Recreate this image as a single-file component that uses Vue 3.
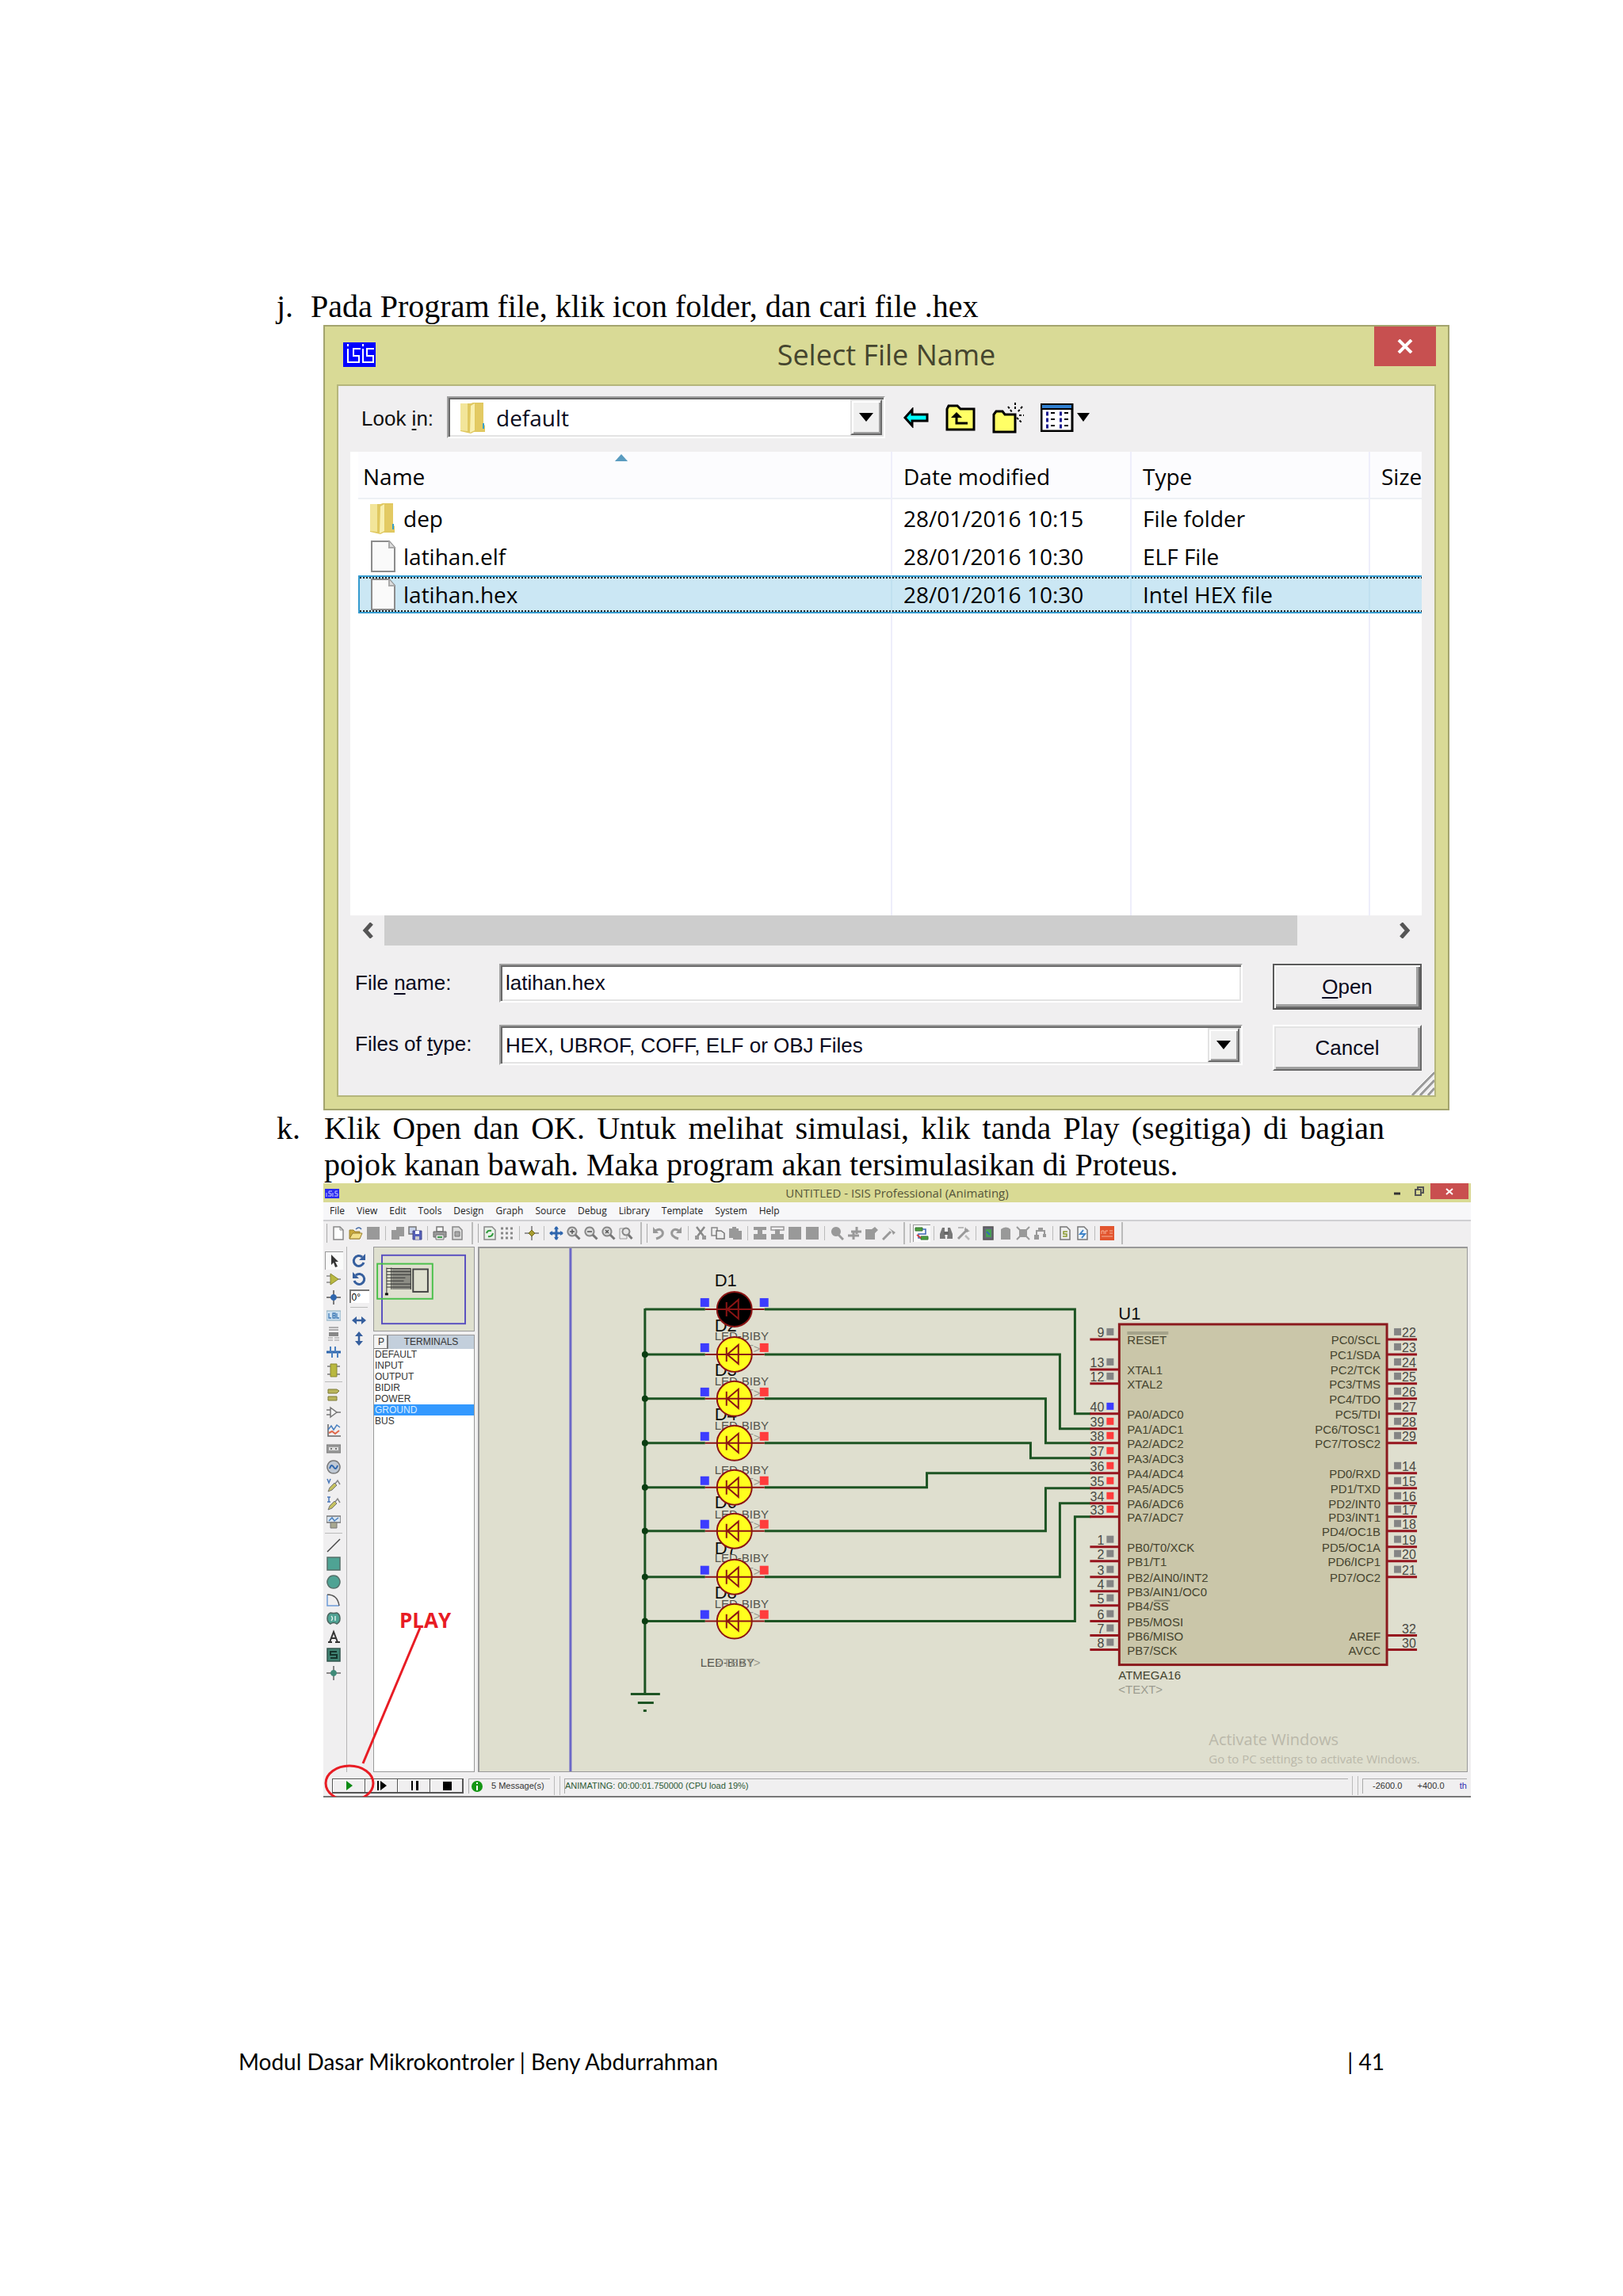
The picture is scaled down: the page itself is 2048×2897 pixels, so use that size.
<script setup>
import { ref } from "vue";

const folder = ref("default");
const fileName = ref("latihan.hex");
const fileType = ref("HEX, UBROF, COFF, ELF or OBJ Files");
const angle = ref("0°");

const files = [
  { name: "dep", date: "28/01/2016 10:15", type: "File folder", icon: "folder" },
  { name: "latihan.elf", date: "28/01/2016 10:30", type: "ELF File", icon: "file" },
  { name: "latihan.hex", date: "28/01/2016 10:30", type: "Intel HEX file", icon: "file", selected: true },
];

const menus = ["File", "View", "Edit", "Tools", "Design", "Graph", "Source", "Debug", "Library", "Template", "System", "Help"];
const terminals = ["DEFAULT", "INPUT", "OUTPUT", "BIDIR", "POWER", "GROUND", "BUS"];

// every icon is a list of [path, fill, stroke, stroke width] on an 18x18 grid
const g = "#999";
const block = [["M1 1H17V17H1Z", g]];
const lens = (mark) => [
  ["M7 1.5A5.5 5.5 0 1 1 6.9 1.5Z", "#ddd", "#888", 2],
  ["M11 11L16.5 16.5", "none", "#777", 3],
  [mark, "none", "#555", 1.5],
];
const probe = (mark) => [
  [mark, "none", "#4a78b8", 1.5],
  ["M2 17L4 12L10 6L13 9L7 15Z", "#c4c060", "#777", 1],
  ["M11 7L14 3L17 8", "none", "#888", 1.5],
];

const icons = {
  new: [["M3 1H11L15 5V17H3Z", "#fff", "#888", 1.5], ["M11 1V5H15", "none", "#888", 1]],
  open: [["M1 16V5H6L8 7H14V16Z", "#c9a93c", "#9a8030", 1], ["M1 16L5 9H17L14 16Z", "#f2e08a", "#9a8030", 1], ["M9 4Q13 0 16 4", "none", "#4a6ea8", 1.5]],
  save: block,
  import: [["M1 5H7V1H17V13H11V17H1Z", g]],
  export: [["M1 1H10V10H1Z", "#c9d4ea", "#777", 1.5], ["M6 6H17V17H6Z", "#5560b8", "#444a90", 1], ["M9 6H14V10H9Z", "#fff"], ["M9 13H14V17H9Z", "#ccc"]],
  print: [["M5 1H13V7H5Z", "#fff", "#777", 1.5], ["M1 7H17V14H1Z", "#999", "#666", 1], ["M4 11H14V17H4Z", "#e6e6e6", "#777", 1], ["M6 14H12", "none", "#3a9a4a", 2]],
  area: [["M3 1H11L15 5V17H3Z", "#ddd", "#888", 1.5], ["M6 7H12V13H6Z", "#aaa", "#777", 1]],
  redraw: [["M2 1H12L16 5V17H2Z", "#e8f0e8", "#888", 1.5], ["M5 9Q6 5 11 6M13 9Q12 14 7 13", "none", "#2f9a3c", 2]],
  grid: [["M1 3H17M1 9H17M1 15H17", "none", "#888", 3, "3 3"]],
  origin: [["M9 0V18M0 9H18", "none", "#777", 1.5], ["M9 5L13 9L9 13L5 9Z", "#a89c30", "#6e6820", 1]],
  pan: [["M9 1V17M1 9H17", "none", "#2f66ad", 3], ["M9 0L12 4H6ZM9 18L12 14H6ZM0 9L4 6V12ZM18 9L14 6V12Z", "#2f66ad"]],
  zoomIn: lens("M4 7H10M7 4V10"),
  zoomOut: lens("M4 7H10"),
  zoomAll: lens("M5 5L9 9M9 5L5 9"),
  zoomArea: [["M1 3H10V16H1Z", "#eee", "#999", 1], ["M9 2.5A4.5 4.5 0 1 1 8.9 2.5Z", "#e6e6e6", "#888", 2], ["M12 11L16.5 16", "none", "#777", 3]],
  undo: [["M6 16Q16 13 14 7Q11 2 5 6", "none", g, 3], ["M2 1V9H9Z", g]],
  redo: [["M12 16Q2 13 4 7Q7 2 13 6", "none", g, 3], ["M16 1V9H9Z", g]],
  cut: [["M4 1L13 13M14 1L5 13", "none", "#888", 2.5], ["M2 12H7V17H2ZM11 12H16V17H11Z", g]],
  copy: [["M1 2H8V12H1Z", "#eee", "#888", 1.5], ["M7 6H13L17 9V16H7Z", "#eee", "#777", 1.5]],
  paste: [["M1 3H5V1H10V3H13V6H17V17H6V15H1Z", g]],
  blockCopy: [["M1 1H17V5H12V10H17V17H1V10H6V5H1Z", g]],
  blockMove: [["M1 1H17V5H1Z", "none", g, 1.5], ["M6 4H12V10H17V17H1V10H6Z", g]],
  blockRotate: block,
  blockDelete: block,
  pick: [["M8 1A6 6 0 1 1 7.9 1Z", g], ["M11 11L17 17", "none", g, 3]],
  make: [["M1 12H15M5 7H18M8 8V17M12 1V10", "none", g, 3]],
  pack: [["M1 4H9L13 1L17 5L13 9V17H1Z", g]],
  decompose: [["M1 17L11 7", "none", g, 3], ["M8 2L17 8L14 11L12 6Z", g]],
  wire: [["M1 2H10V6H1ZM8 13H17V17H8Z", "#4ba040", "#35702e", 1], ["M10 4H14V10H5V15H8", "none", "#3f68b8", 1.5], ["M3 11L8 15", "none", "#d84040", 2]],
  find: [["M4 2H7V9L8 16H1V10ZM11 2H14L17 10V16H10L11 9Z", "#777"], ["M6 7H12V11H6Z", "#666"]],
  props: [["M2 16L14 4", "none", g, 3], ["M11 1L13 5L17 6L13 8L10 5Z", g], ["M2 2H9", "none", "#bbb", 2], ["M11 12L16 17", "none", "#bbb", 2.5]],
  design: [["M3 1H15V17H3Z", "#667", "#555", 1.5], ["M6 4H13V14H6Z", "#48a050"], ["M7 7L11 11", "none", "#3468b8", 2]],
  sheet: [["M3 4Q9 -1 15 4V17H3Z", g]],
  remove: [["M4 4H14V14H4Z", g], ["M1 1L17 17M17 1L1 17", "none", g, 2]],
  goto: [["M6 2H12V6H6ZM1 11H7V17H1ZM12 10H16V14H12Z", g], ["M4 11V6H14V10", "none", g, 2]],
  bom: [["M3 1H11L15 5V17H3Z", "#eee", "#777", 1.5], ["M12 7H7V10H11V13H6", "none", "#8a9a30", 1.5]],
  erc: [["M3 1H11L15 5V17H3Z", "#eef4fb", "#777", 1.5], ["M10 5L6 10H12L8 15", "none", "#3f84c8", 2]],
  ares: [["M0 0H18V18H0Z", "#e2552f"], ["M2 10V6H5V10M7 10V6H10M12 6H16M12 9H16M2 13H16", "none", "#f7b49a", 1]],

  select: [["M6 1V14L9 11L11 17L14 16L11 10H15Z", "#333"]],
  component: [["M0 5H5M0 13H5M14 9H18", "none", "#888", 1.5], ["M5 2L15 9L5 16Z", "#b9b840", "#8a8a30", 1]],
  junction: [["M9 0V18M0 9H18", "none", "#555", 1.5], ["M9 5A4 4 0 1 1 8.9 5Z", "#2f66ad"]],
  label: [["M0 3H18V15H0Z", "#cfe2f2", "#8ab", 1], ["M3 6V12H6M8 6H11V12H8ZM8 9H11M13 6V12H16", "none", "#3f7ab5", 1.3]],
  script: [["M3 1H15M3 4H15", "none", "#999", 1.5], ["M3 7H15V12H3Z", "#888"], ["M2 14H8M10 14H16M2 17H8M10 17H16", "none", "#999", 1]],
  bus: [["M0 9H18", "none", "#2f66ad", 3], ["M5 2V9M11 2V9M7 9V16M14 9V16", "none", "#4a80c0", 2]],
  sub: [["M5 1H13V17H5Z", "#b9b840", "#88872c", 1], ["M1 4H5M1 14H5M13 4H17M13 14H17", "none", "#777", 1.5]],
  terminal: [["M2 3H13L16 5L13 8H2ZM2 12H13V17H2Z", "#b9b55a", "#7d7a38", 1]],
  pin: [["M5 3L13 9L5 15Z", "#f6f6f6", "#777", 1.5], ["M0 6H5M0 12H5M13 9H18", "none", "#777", 1.5]],
  graph: [["M2 1V16H18", "none", "#666", 1.5], ["M2 8L6 3L9 8L13 2L17 5", "none", "#4a80c0", 1.5], ["M3 12L7 10L11 13L16 9", "none", "#e0684a", 2]],
  tape: [["M0 4H18V14H0Z", "#999", "#777", 1], ["M3 7H15V11H3Z", "#ddd"], ["M5 9H7M11 9H13", "none", "#777", 2]],
  generator: [["M9 1A8 8 0 1 1 8.9 1Z", "#bfc8d4", "#777", 1.5], ["M4 11Q6 4 9 9T14 7", "none", "#2f66ad", 2]],
  vprobe: probe("M1 1L3 6L5 1"),
  iprobe: probe("M1 1H5M3 1V7M1 7H5"),
  meter: [["M0 2H18V10H0Z", "#dbe6f0", "#777", 1.5], ["M5 10H13V17H5Z", "#a8a890", "#777", 1], ["M3 8L7 4L10 8L15 4", "none", "#4a80c0", 1.5]],
  line: [["M1 17L17 1", "none", "#444", 1.5]],
  box: [["M1 1H17V17H1Z", "#4fa394", "#55706a", 1.5]],
  circle: [["M9 1A8 8 0 1 1 8.9 1Z", "#4fa394", "#55706a", 1.5]],
  arc: [["M1 2V16H16", "none", "#6c9cd8", 1.5], ["M1 2Q14 2 16 16", "none", "#555", 1.5]],
  path: [["M5 2Q9 3 13 2Q17 4 17 9Q17 14 13 16Q9 13 5 16Q1 14 1 9Q1 4 5 2Z", "#4fa394", "#4a655f", 1.5], ["M6 6Q9 9 6 12M11 6V12", "none", "#dceee9", 1.5]],
  text: [["M2 16H7M11 16H17M4 16L9 3L14 16M6 11H12", "none", "#333", 2]],
  symbol: [["M1 1H17V17H1Z", "#3f8272", "#33564d", 1.5], ["M13 5H5V9H13V13H5", "none", "#16342c", 2]],
  marker: [["M9 0V18M0 9H18", "none", "#666", 1.5], ["M9 5A4 4 0 1 1 8.9 5Z", "#3f8a78"]],
  rotateCw: [["M15 11A6.5 6.5 0 1 1 13 4", "none", "#365f9e", 3], ["M17 0V8H9Z", "#365f9e"]],
  rotateCcw: [["M3 11A6.5 6.5 0 1 0 5 4", "none", "#365f9e", 3], ["M1 0V8H9Z", "#365f9e"]],
  flipH: [["M3 9H15", "none", "#365f9e", 2.5], ["M0 9L6 4V14ZM18 9L12 4V14Z", "#365f9e"]],
  flipV: [["M9 3V15", "none", "#365f9e", 2.5], ["M9 0L14 6H4ZM9 18L14 12H4Z", "#365f9e"]],
};

// "|" is a separator
const toolbars = [
  ["new", "open", "save", "|", "import", "export", "|", "print", "area"],
  ["redraw", "grid", "|", "origin", "|", "pan", "zoomIn", "zoomOut", "zoomAll", "zoomArea"],
  ["undo", "redo", "|", "cut", "copy", "paste", "|", "blockCopy", "blockMove", "blockRotate", "blockDelete", "|", "pick", "make", "pack", "decompose"],
  ["wire", "|", "find", "props", "|", "design", "sheet", "remove", "goto", "|", "bom", "erc", "|", "ares"],
];
const modes = [
  "select", "component", "junction", "label", "script", "bus", "sub", "|",
  "terminal", "pin", "graph", "tape", "generator", "vprobe", "iprobe", "meter", "|",
  "line", "box", "circle", "arc", "path", "text", "symbol", "marker",
];

// y: row of the led, turn: x where the wire bends, pinY: row of the pin it ends on
const leds = [
  { y: 82, turn: 757, pinY: 214, name: "D1", off: true },
  { y: 139, turn: 738, pinY: 233, name: "D2" },
  { y: 195, turn: 720, pinY: 251, name: "D3" },
  { y: 251, turn: 701, pinY: 270, name: "D4" },
  { y: 307, turn: 570, pinY: 289, name: "" },
  { y: 362, turn: 720, pinY: 308, name: "D6" },
  { y: 420, turn: 738, pinY: 327, name: "D7" },
  { y: 476, turn: 757, pinY: 344, name: "D8" },
];

const grey = "#848484";
const red = "#ff3c3c";
const blue = "#3c3cff";

const leftPins = [
  [9, "RESET", 120, grey], [13, "XTAL1", 158, grey], [12, "XTAL2", 176, grey],
  [40, "PA0/ADC0", 214, blue], [39, "PA1/ADC1", 233, red], [38, "PA2/ADC2", 251, red],
  [37, "PA3/ADC3", 270, red], [36, "PA4/ADC4", 289, red], [35, "PA5/ADC5", 308, red],
  [34, "PA6/ADC6", 327, red], [33, "PA7/ADC7", 344, red],
  [1, "PB0/T0/XCK", 382, grey], [2, "PB1/T1", 400, grey], [3, "PB2/AIN0/INT2", 420, grey],
  [4, "PB3/AIN1/OC0", 438, grey], [5, "PB4/SS", 456, grey], [6, "PB5/MOSI", 476, grey],
  [7, "PB6/MISO", 494, grey], [8, "PB7/SCK", 512, grey],
];
const rightPins = [
  [22, "PC0/SCL", 120, grey], [23, "PC1/SDA", 139, grey], [24, "PC2/TCK", 158, grey],
  [25, "PC3/TMS", 176, grey], [26, "PC4/TDO", 195, grey], [27, "PC5/TDI", 214, grey],
  [28, "PC6/TOSC1", 233, grey], [29, "PC7/TOSC2", 251, grey],
  [14, "PD0/RXD", 289, grey], [15, "PD1/TXD", 308, grey], [16, "PD2/INT0", 327, grey],
  [17, "PD3/INT1", 344, grey], [18, "PD4/OC1B", 362, grey], [19, "PD5/OC1A", 382, grey],
  [20, "PD6/ICP1", 400, grey], [21, "PD7/OC2", 420, grey],
  [32, "AREF", 494, null], [30, "AVCC", 512, null],
];
</script>

<template>
  <div class="page">
    <main>
      <div class="step">
        <span class="marker short">j.</span>
        <p>Pada Program file, klik icon folder, dan cari file .hex</p>
      </div>

      <section class="dialog">
        <header class="dialog-title">
          <svg class="isis" viewBox="0 0 41 31">
            <rect width="41" height="31" fill="#0000ff" />
            <path d="M6 2V5M6 8V25H20V17H13V8H22M25 2V5M25 8V25H38V17H30V8H39" fill="none" stroke="#fff" stroke-width="2" />
          </svg>
          <h2>Select File Name</h2>
          <button class="close" aria-label="Close">
            <svg viewBox="0 0 20 18"><path d="M2 1L18 17M18 1L2 17" stroke="#fff" stroke-width="4" /></svg>
          </button>
        </header>

        <div class="dialog-body">
          <div class="lookin">
            <label for="folder">Look <u>i</u>n:</label>
            <div class="combo folder-combo">
              <svg class="folder-icon" viewBox="0 0 33 40">
                <path d="M1 2H14L17 1H30V28L32 30V38H18L14 40L1 37Z" fill="#e0c860" />
                <path d="M1 2H10V37L1 36Z" fill="#f2e59a" />
                <path d="M14 5L19 2V36L13 39Z" fill="#f8efb0" />
                <path d="M20 3H30V36H20Z" fill="#e3ca63" />
                <path d="M29 27H31V34H29Z" fill="#3aa0c8" />
              </svg>
              <select id="folder" v-model="folder"><option>default</option></select>
              <span class="drop"></span>
            </div>
            <div class="nav">
              <button aria-label="Back">
                <svg width="32" height="26" viewBox="0 0 32 26"><path d="M2 13L11 3V9H30V17H11V23Z" fill="#00ffff" stroke="#000" stroke-width="3" /></svg>
              </button>
              <button aria-label="Up one level">
                <svg width="38" height="34" viewBox="0 0 38 34">
                  <path d="M2 32V6L4 2H15L19 6H36V32Z" fill="#ffff66" stroke="#000" stroke-width="3" />
                  <path d="M14 14V24H28" fill="none" stroke="#000" stroke-width="3" /><path d="M7 17L14 10L21 17Z" />
                </svg>
              </button>
              <button aria-label="New folder">
                <svg width="40" height="40" viewBox="0 0 40 40">
                  <path d="M2 38V16L5 12H13L16 16H29V38Z" fill="#ffff66" stroke="#000" stroke-width="3" />
                  <path d="M29 1V9M20 6L25 13M38 6L32 13M34 17H40M31 20L38 27" stroke="#000" stroke-width="2" stroke-dasharray="3 2" />
                </svg>
              </button>
              <button aria-label="View">
                <svg width="62" height="36" viewBox="0 0 62 36">
                  <path d="M1 1H40V35H1Z" fill="#fff" stroke="#000" stroke-width="3" />
                  <path d="M2 2H39V6H2Z" fill="#2f7fd0" /><path d="M1 7H40" stroke="#000" stroke-width="2" />
                  <path d="M7 13H10M7 21H10M7 29H10M24 13H27M24 21H27M24 29H27" stroke="#1a1a90" stroke-width="5" />
                  <path d="M13 12H18M13 20H18M13 28H18M30 12H35M30 20H35M30 28H35" stroke="#000" stroke-width="2" />
                  <path d="M46 12H62L54 23Z" />
                </svg>
              </button>
            </div>
          </div>

          <div class="list">
            <table>
              <colgroup><col /><col class="c-date" /><col class="c-type" /><col class="c-size" /></colgroup>
              <thead>
                <tr>
                  <th>Name <svg class="sort" viewBox="0 0 18 10"><path d="M0 10L9 0L18 10Z" fill="#5a9cc0" /></svg></th>
                  <th>Date modified</th>
                  <th>Type</th>
                  <th>Size</th>
                </tr>
              </thead>
              <tbody>
                <tr v-for="file in files" :key="file.name" :class="{ selected: file.selected }">
                  <td>
                    <div class="name">
                      <svg v-if="file.icon === 'folder'" class="folder-icon" viewBox="0 0 33 40">
                        <path d="M1 2H14L17 1H30V28L32 30V38H18L14 40L1 37Z" fill="#e0c860" />
                        <path d="M1 2H10V37L1 36Z" fill="#f2e59a" />
                        <path d="M14 5L19 2V36L13 39Z" fill="#f8efb0" />
                        <path d="M20 3H30V36H20Z" fill="#e3ca63" />
                        <path d="M29 27H31V34H29Z" fill="#3aa0c8" />
                      </svg>
                      <svg v-else class="folder-icon" viewBox="0 0 33 40">
                        <path d="M3 1H25L32 9V39H3Z" fill="#fafafa" stroke="#8c8c8c" stroke-width="2" />
                        <path d="M25 1V9H32" fill="#ddd" stroke="#aaa" stroke-width="2" />
                      </svg>
                      {{ file.name }}
                    </div>
                  </td>
                  <td>{{ file.date }}</td>
                  <td>{{ file.type }}</td>
                  <td></td>
                </tr>
                <tr class="rest"><td></td><td></td><td></td><td></td></tr>
              </tbody>
            </table>
          </div>
          <div class="scroll">
            <button aria-label="Scroll left"><svg viewBox="0 0 16 20"><path d="M13 1L5 10L13 19" fill="none" stroke="#555" stroke-width="5" /></svg></button>
            <div class="track"><div class="thumb"></div></div>
            <button aria-label="Scroll right"><svg viewBox="0 0 16 20"><path d="M3 1L11 10L3 19" fill="none" stroke="#555" stroke-width="5" /></svg></button>
          </div>

          <div class="form">
            <label for="fname">File <u>n</u>ame:</label>
            <input id="fname" v-model="fileName" class="field" type="text" />
            <button class="push default">
              <span><u>O</u>pen</span>
            </button>
            <label for="ftype">Files of <u>t</u>ype:</label>
            <div class="combo">
              <select id="ftype" v-model="fileType"><option>HEX, UBROF, COFF, ELF or OBJ Files</option></select>
              <span class="drop"></span>
            </div>
            <button class="push">Cancel</button>
          </div>
          <svg class="grip" viewBox="0 0 30 30">
            <path d="M2 30L30 1M12 30L30 11M22 30L30 21" stroke="#999" stroke-width="3" />
            <path d="M0 29L29 0M9 30L30 8M19 30L30 18" stroke="#fff" stroke-width="1" />
          </svg>
        </div>
      </section>

      <div class="step">
        <span class="marker">k.</span>
        <p>Klik Open dan OK. Untuk melihat simulasi, klik tanda Play (segitiga) di bagian pojok kanan bawah. Maka program akan tersimulasikan di Proteus.</p>
      </div>

      <section class="window">
        <header class="win-title">
          <svg class="mini-isis" viewBox="0 0 18 12">
            <rect width="18" height="12" fill="#2a2af0" />
            <path d="M2 5V10M9 3H5V6H8V9H4M10 5V10M16 3H13V6H16V9H12" fill="none" stroke="#c8c8ff" stroke-width="1" />
          </svg>
          <h2>UNTITLED - ISIS Professional (Animating)</h2>
          <div class="win-buttons">
            <button aria-label="Minimize"><svg width="10" height="12"><path d="M1 9H9" stroke="#333" stroke-width="3" /></svg></button>
            <button aria-label="Restore"><svg width="12" height="12"><path d="M1 4H8V11H1ZM4 4V1H11V8H8" fill="none" stroke="#555" stroke-width="2" /></svg></button>
            <button class="red" aria-label="Close"><svg width="10" height="9"><path d="M1 1L9 8M9 1L1 8" stroke="#fff" stroke-width="2" /></svg></button>
          </div>
        </header>
        <nav class="menu">
          <a v-for="menu in menus" :key="menu" href="#">{{ menu }}</a>
        </nav>
        <div class="toolbars">
          <div v-for="(bar, b) in toolbars" :key="b" class="toolbar">
            <template v-for="(name, i) in bar" :key="i">
              <span v-if="name === '|'" class="sep"></span>
              <button v-else :aria-label="name" :class="{ on: name === 'wire' }">
                <svg viewBox="0 0 18 18">
                  <path v-for="(p, n) in icons[name]" :key="n" :d="p[0]" :fill="p[1]" :stroke="p[2]" :stroke-width="p[3]" :stroke-dasharray="p[4]" />
                </svg>
              </button>
            </template>
          </div>
        </div>

        <div class="win-body">
          <div class="modes">
            <template v-for="(name, i) in modes" :key="i">
              <span v-if="name === '|'" class="hsep"></span>
              <button v-else :aria-label="name" :class="{ on: name === 'select' }">
                <svg viewBox="0 0 18 18">
                  <path v-for="(p, n) in icons[name]" :key="n" :d="p[0]" :fill="p[1]" :stroke="p[2]" :stroke-width="p[3]" />
                </svg>
              </button>
            </template>
          </div>
          <div class="modes rotate">
            <button v-for="name in ['rotateCw', 'rotateCcw']" :key="name" :aria-label="name">
              <svg viewBox="0 0 18 18"><path v-for="(p, n) in icons[name]" :key="n" :d="p[0]" :fill="p[1]" :stroke="p[2]" :stroke-width="p[3]" /></svg>
            </button>
            <input v-model="angle" type="text" aria-label="Angle" />
            <span class="hsep"></span>
            <button v-for="name in ['flipH', 'flipV']" :key="name" :aria-label="name">
              <svg viewBox="0 0 18 18"><path v-for="(p, n) in icons[name]" :key="n" :d="p[0]" :fill="p[1]" :stroke="p[2]" :stroke-width="p[3]" /></svg>
            </button>
          </div>

          <aside class="panel">
            <svg class="overview" viewBox="0 0 128 107">
              <rect x="10" y="10" width="107" height="88" fill="none" stroke="#5a50c0" stroke-width="2" />
              <rect x="4" y="21" width="71" height="45" fill="none" stroke="#4ac04a" stroke-width="2" />
              <rect x="23" y="27" width="24" height="27" fill="#8c8c84" />
              <path d="M16 26V61M22 26V54M16 27H47M16 31H47M16 35H47M16 39H40M16 43H38M16 47H47M16 51H47M47 27V54" stroke="#333" stroke-width="1" />
              <path d="M14 60H18" stroke="#111" stroke-width="3" />
              <rect x="50" y="28" width="19" height="29" fill="#dfe0cf" stroke="#444" stroke-width="2" />
            </svg>
            <div class="terminals">
              <div class="terminals-head"><button>P</button><span>TERMINALS</span></div>
              <ul>
                <li v-for="item in terminals" :key="item" :class="{ selected: item === 'GROUND' }">{{ item }}</li>
              </ul>
            </div>
          </aside>

          <svg class="canvas" viewBox="5 5 1247 661">
            <path d="M120 5V666" stroke="#6c68c8" stroke-width="3" />

            <g fill="none" stroke="#1d5423" stroke-width="3">
              <path d="M214 81V568M196 568H233M205 579H225M212 589H216" />
              <path v-for="led in leds" :key="led.y" :d="`M214 ${led.y}H290M365 ${led.y}H${led.turn}V${led.pinY}H777`" />
            </g>
            <circle v-for="led in leds.slice(1)" :key="led.y" cx="214" :cy="led.y" r="4" fill="#0b3d12" />

            <g v-for="led in leds" :key="led.y">
              <text x="302" :y="led.y - 29" class="ref">{{ led.name }}</text>
              <text v-if="led.y < 476" x="302" :y="led.y + 39" class="part">LED-BIBY</text>
              <text v-if="led.y > 82" x="304" :y="led.y - 2" class="ghost">&lt;TEXT&gt;</text>
            </g>
            <text x="284" y="533" class="part">LED-BIBY</text>
            <text x="304" y="533" class="ghost">&lt;TEXT&gt;</text>

            <g v-for="led in leds" :key="led.y" stroke="#8b1414" stroke-width="2">
              <circle cx="327" :cy="led.y" r="22" :fill="led.off ? '#000' : '#ffff1e'" />
              <path :d="`M290 ${led.y}H365M317 ${led.y - 9}v18M332 ${led.y - 12}v24l-14 -12z`" fill="none" />
              <rect x="284" :y="led.y - 14" width="11" height="11" :fill="blue" stroke="none" />
              <rect x="359" :y="led.y - 14" width="11" height="11" :fill="led.off ? blue : red" stroke="none" />
            </g>

            <rect x="813" y="101" width="338" height="430" fill="#cac6a9" stroke="#8b1a1e" stroke-width="3" />
            <text x="812" y="95" class="ref">U1</text>
            <path d="M823 112H875" stroke="#a5a38a" stroke-width="4" />
            <path d="M857 450H877" stroke="#8d8b74" stroke-width="2" />
            <g v-for="[num, name, y, color] in leftPins" :key="num">
              <path :d="`M776 ${y}H812`" stroke="#96141e" stroke-width="3" />
              <rect x="797" :y="y - 14" width="9" height="9" :fill="color" />
              <text x="794" :y="y - 3" class="num" text-anchor="end">{{ num }}</text>
              <text x="823" :y="y + 6" class="pin">{{ name }}</text>
            </g>
            <g v-for="[num, name, y, color] in rightPins" :key="num">
              <path :d="`M1152 ${y}H1189`" stroke="#96141e" stroke-width="3" />
              <rect v-if="color" x="1160" :y="y - 14" width="9" height="9" :fill="color" />
              <text x="1170" :y="y - 3" class="num">{{ num }}</text>
              <text x="1143" :y="y + 6" class="pin" text-anchor="end">{{ name }}</text>
            </g>
            <text x="812" y="549" class="pin">ATMEGA16</text>
            <text x="812" y="567" class="ghost">&lt;TEXT&gt;</text>

            <text x="926" y="633" class="activate big">Activate Windows</text>
            <text x="926" y="656" class="activate">Go to PC settings to activate Windows.</text>
          </svg>
        </div>

        <footer class="status">
          <div class="player">
            <button aria-label="Play"><svg viewBox="0 0 14 12"><path d="M3 0L11 6L3 12Z" fill="#0c8a14" /></svg></button>
            <button aria-label="Step"><svg viewBox="0 0 14 12"><path d="M1 0H3V12H1ZM5 0L13 6L5 12Z" /></svg></button>
            <button aria-label="Pause"><svg viewBox="0 0 14 12"><path d="M3 0H5V12H3ZM9 0H12V12H9Z" /></svg></button>
            <button aria-label="Stop"><svg viewBox="0 0 14 12"><path d="M2 1H13V12H2Z" /></svg></button>
          </div>
          <div class="well messages">
            <svg viewBox="0 0 14 14"><circle cx="7" cy="7" r="7" fill="#149614" /><path d="M7 2V4M7 6V12" stroke="#fff" stroke-width="2" /></svg>
            5 Message(s)
          </div>
          <span class="split"></span>
          <div class="well running">ANIMATING: 00:00:01.750000 (CPU load 19%)</div>
          <span class="split"></span>
          <div class="well coords"><span>-2600.0</span><span>+400.0</span><span class="unit">th</span></div>
        </footer>

        <svg class="annotation" viewBox="0 0 200 774">
          <text x="96" y="561">PLAY</text>
          <path d="M122 561L50 732" />
          <ellipse cx="33" cy="757" rx="30" ry="22" />
        </svg>
      </section>
    </main>

    <footer class="page-foot">
      <span>Modul Dasar Mikrokontroler | Beny Abdurrahman</span>
      <span>| 41</span>
    </footer>
  </div>
</template>

<style>
body {
  background: #fff;
}
</style>

<style scoped>
.page {
  padding: 364px 301px 272px;
  color: #000;
}

h2, p, ul {
  margin: 0;
  padding: 0;
  font-weight: normal;
}

button {
  padding: 0;
  border: 0;
  background: none;
  color: inherit;
  font: inherit;
}

.step {
  display: flex;
  padding-left: 48px;
  font: 40px/46px "Liberation Serif", serif;
}
.marker {
  flex: none;
  width: 60px;
}
.marker.short {
  width: 43px;
}
.step p {
  flex: 1;
  text-align: justify;
}

/* file dialog */
.dialog {
  margin: 0 -82px 0 107px;
  padding: 0 15px 15px;
  border: 2px solid #a3a46e;
  background: #d9da96;
  font: 28px/36px "Open Sans", sans-serif;
}
.dialog-title {
  display: grid;
  grid-template-columns: 1fr auto 1fr;
  align-items: start;
  height: 73px;
}
.isis {
  width: 41px;
  height: 31px;
  margin: 20px 0 0 8px;
}
.dialog-title h2 {
  margin-top: 14px;
  color: #45452e;
  font-size: 36px;
  line-height: 44px;
}
.close {
  display: grid;
  place-items: center;
  justify-self: end;
  width: 78px;
  height: 50px;
  background: #c75050;
}
.close svg {
  width: 20px;
  height: 18px;
}
.dialog-body {
  position: relative;
  padding: 13px 16px 31px 15px;
  border: 2px solid #b5b67c;
  background: #f0eff0;
}
.lookin {
  display: flex;
  align-items: center;
  margin-bottom: 17px;
  color: #111;
}
.lookin label {
  width: 108px;
  padding: 2px 0 0 14px;
  font: 26px/32px "Liberation Sans", sans-serif;
}
.combo {
  position: relative;
  height: 51px;
}
.combo select, .field {
  box-sizing: border-box;
  width: 100%;
  height: 100%;
  margin: 0;
  padding: 0 6px;
  border: 2px solid;
  border-color: #a0a0a0 #fff #fff #a0a0a0;
  border-radius: 0;
  outline: 0;
  background: #fff;
  box-shadow: inset 2px 2px #696969, inset -2px -2px #e3e3e3;
  color: #0a0a20;
  font: 26px/32px "Liberation Sans", sans-serif;
  appearance: none;
}
.field {
  height: 49px;
}
.folder-combo {
  width: 553px;
  height: 53px;
}
.folder-combo select {
  padding-left: 60px;
  font: 28px/36px "Open Sans", sans-serif;
}
.folder-icon {
  width: 33px;
  height: 40px;
}
.folder-combo .folder-icon {
  position: absolute;
  top: 7px;
  left: 16px;
}
.drop {
  position: absolute;
  top: 4px;
  right: 4px;
  bottom: 4px;
  display: grid;
  place-items: center;
  width: 36px;
  border: 2px solid;
  border-color: #e3e3e3 #696969 #696969 #e3e3e3;
  background: #f0f0f0;
  box-shadow: inset 2px 2px #fff, inset -2px -2px #a0a0a0;
  pointer-events: none;
}
.drop::after {
  border: 9px solid transparent;
  border-top: 11px solid #000;
  border-bottom: 0;
  content: "";
}
.nav {
  display: flex;
  align-items: center;
  gap: 21px;
  margin-left: 23px;
}
.nav button, .nav svg {
  display: block;
}

.list {
  height: 585px;
  padding-left: 10px;
  overflow: hidden;
  background: #fff;
}
table {
  width: 100%;
  height: 100%;
  border-spacing: 0;
  table-layout: fixed;
}
.c-date {
  width: 302px;
}
.c-type {
  width: 301px;
}
.c-size {
  width: 67px;
}
th {
  position: relative;
  height: 54px;
  padding: 4px 0 0 14px;
  border-bottom: 2px solid #edf0f5;
  border-left: 2px solid #eeeefb;
  background: #fcfcfe;
  font-weight: normal;
  text-align: left;
}
th:first-child {
  padding-left: 6px;
  border-left: 0;
}
.sort {
  position: absolute;
  top: 3px;
  left: 48%;
  width: 18px;
  height: 9px;
}
td {
  height: 48px;
  padding: 0 0 0 14px;
  border-left: 2px solid #eeeefb;
}
td:first-child {
  padding-left: 14px;
  border-left: 0;
}
.name {
  display: flex;
  align-items: center;
  gap: 10px;
}
.selected td {
  height: 44px;
  border-top: 2px solid #359bcf;
  border-bottom: 2px solid #359bcf;
  border-left-color: #c0e0f0;
  background:
    repeating-linear-gradient(90deg, #222 0 2px, transparent 2px 4px) 0 0 / 100% 2px no-repeat,
    repeating-linear-gradient(90deg, #222 0 2px, transparent 2px 4px) 0 100% / 100% 2px no-repeat,
    #cbe7f4;
}
.selected td:first-child {
  padding-left: 12px;
  border-left: 2px solid #359bcf;
}
.rest td {
  height: auto;
}
.scroll {
  display: flex;
  height: 38px;
}
.scroll button {
  display: grid;
  place-items: center;
  width: 43px;
}
.scroll svg {
  width: 16px;
  height: 20px;
}
.track {
  flex: 1;
}
.thumb {
  width: 91%;
  height: 100%;
  background: #cdcdcd;
}
.form {
  display: grid;
  grid-template-columns: 188px 1fr 188px;
  row-gap: 19px;
  margin-top: 23px;
  color: #0a0a20;
  font: 26px/32px "Liberation Sans", sans-serif;
}
.form label {
  padding: 8px 0 0 6px;
}
.form .field, .form .combo {
  width: calc(100% - 38px);
}
.push {
  height: 58px;
  border: 2px solid;
  border-color: #fff #696969 #696969 #fff;
  box-shadow: inset 2px 2px #e3e3e3, inset -3px -3px #a0a0a0;
}
.push.default {
  border-color: #5a5a5a;
  box-shadow: inset 2px 2px #fff, inset -2px -2px #696969, inset -5px -5px #a0a0a0;
}
u {
  text-underline-offset: 4px;
}
.grip {
  position: absolute;
  right: 0;
  bottom: 0;
  width: 30px;
  height: 30px;
}

/* isis window */
.window {
  position: relative;
  margin: 0 -109px 0 107px;
  background: #f0eff0;
  font: 12px/16px "Open Sans", sans-serif;
}
.win-title {
  display: grid;
  grid-template-columns: 1fr auto 1fr;
  align-items: start;
  height: 24px;
  background: #d9da94;
}
.mini-isis {
  width: 18px;
  height: 12px;
  margin: 7px 0 0 2px;
}
.win-title h2 {
  color: #55553a;
  font-size: 15px;
  line-height: 24px;
}
.win-buttons {
  display: flex;
  justify-content: flex-end;
  padding-right: 3px;
}
.win-buttons button {
  display: grid;
  place-items: center;
  width: 28px;
  height: 20px;
}
.win-buttons .red {
  width: 48px;
  background: #c94f4f;
}
.menu {
  display: flex;
  gap: 15px;
  height: 22px;
  padding-left: 8px;
  border-bottom: 2px solid #cfcfd2;
  background: #f7f7f9;
}
.menu a {
  color: #222;
  line-height: 22px;
  text-decoration: none;
}
.toolbars {
  display: flex;
  align-items: center;
  gap: 19px;
  height: 30px;
  padding: 0 0 2px 8px;
}
.toolbar {
  position: relative;
  display: flex;
  align-items: center;
}
.toolbar::before {
  position: absolute;
  left: -4px;
  width: 1px;
  height: 24px;
  background: #aaa;
  content: "";
}
.toolbar::after {
  position: absolute;
  right: -9px;
  width: 2px;
  height: 28px;
  background: #bbb;
  content: "";
}
.toolbar button {
  display: grid;
  place-items: center;
  width: 22px;
  height: 22px;
}
.toolbar svg {
  width: 18px;
  height: 18px;
}
.on {
  background: #fafafa;
  box-shadow: inset 1px 1px #999;
}
.sep {
  width: 1px;
  height: 18px;
  margin: 0 4px;
  background: #bbb;
}

.win-body {
  display: grid;
  grid-template-columns: 30px 33px 128px 1fr;
  padding-right: 4px;
}
.modes {
  display: flex;
  flex-direction: column;
  align-items: center;
  padding: 6px 3px 0 0;
  border-right: 1px solid #b5b5b5;
}
.modes.rotate {
  border: 0;
}
.modes button {
  display: grid;
  place-items: center;
  width: 23px;
  height: 23px;
}
.modes svg {
  width: 18px;
  height: 18px;
}
.modes input {
  box-sizing: border-box;
  width: 25px;
  height: 17px;
  margin-top: 2px;
  padding: 0 1px;
  border: 0;
  border-top: 2px solid #777;
  border-left: 2px solid #777;
  border-radius: 0;
  background: #fff;
  font: 12px/14px "Liberation Sans", sans-serif;
}
.hsep {
  width: 22px;
  height: 1px;
  margin: 3px 0;
  background: #bbb;
}
.rotate .hsep {
  margin: 5px 0 4px;
}
.panel {
  display: flex;
  flex-direction: column;
  gap: 4px;
}
.overview {
  box-sizing: border-box;
  display: block;
  width: 128px;
  height: 107px;
  border: 1px solid #999;
  background: #dfe0cf;
}
.terminals {
  flex: 1;
  border: 1px solid #999;
  background: #fff;
  color: #333;
  font: 12px/14px "Liberation Sans", sans-serif;
}
.terminals-head {
  display: flex;
  height: 17px;
  background: #c3cfdc;
  line-height: 17px;
}
.terminals-head button {
  width: 18px;
  background: #f4f4f4;
  box-shadow: inset -2px -1px #777;
}
.terminals-head span {
  flex: 1;
  text-align: center;
}
ul {
  list-style: none;
}
li {
  height: 14px;
  padding-left: 1px;
}
li.selected {
  background: #3399ff;
  color: #d8ecff;
}

.canvas {
  box-sizing: border-box;
  display: block;
  width: calc(100% - 4px);
  margin-left: 4px;
  border: solid #999;
  border-width: 2px 1px 1px 2px;
  background: #dfdfcf;
  font-family: "Liberation Sans", sans-serif;
}
.ref {
  fill: #111;
  font-size: 22px;
}
.part {
  fill: #55554c;
  font-size: 15px;
}
.ghost {
  fill: #9c9c90;
  font-size: 15px;
}
.num {
  fill: #4a4a44;
  font-size: 16px;
}
.pin {
  fill: #45442f;
  font-size: 15px;
}
.activate {
  fill: #bab8aa;
  font: 15px "Open Sans", sans-serif;
}
.activate.big {
  font-size: 20px;
}

.status {
  display: flex;
  align-items: center;
  height: 30px;
  padding: 2px 5px 0 11px;
  box-sizing: border-box;
  margin-top: 2px;
  border-bottom: 2px solid #777;
  color: #333;
  font: 11px/16px "Liberation Sans", sans-serif;
}
.player {
  display: flex;
  margin-right: 6px;
  border: 1px solid #555;
}
.player button {
  display: grid;
  place-items: center;
  width: 41px;
  height: 17px;
  box-shadow: inset -1px -1px #555, inset 1px 1px #fff;
}
.player svg {
  width: 14px;
  height: 12px;
}
.well {
  box-sizing: border-box;
  height: 19px;
  border-top: 1px solid #aaa;
  border-left: 1px solid #aaa;
  line-height: 17px;
}
.messages {
  display: flex;
  align-items: center;
  gap: 11px;
  width: 103px;
  padding-left: 3px;
}
.messages svg {
  width: 14px;
  height: 14px;
}
.split {
  width: 6px;
  height: 24px;
  margin: 0 5px;
  border: solid #bbb;
  border-width: 0 1px;
}
.running {
  flex: 1;
  color: #2c5a34;
}
.coords {
  display: flex;
  justify-content: space-between;
  width: 132px;
  padding-left: 12px;
}
.unit {
  color: #3030b0;
}

.annotation {
  position: absolute;
  top: 0;
  left: 0;
  width: 200px;
  height: 774px;
  overflow: hidden;
  pointer-events: none;
}
.annotation text {
  fill: #e81c24;
  font: bold 26px "Open Sans", sans-serif;
}
.annotation path, .annotation ellipse {
  fill: none;
  stroke: #e81c24;
  stroke-width: 3px;
}

.page-foot {
  display: flex;
  justify-content: space-between;
  margin-top: 316px;
  font: 28px/34px Lato, sans-serif;
}
</style>
